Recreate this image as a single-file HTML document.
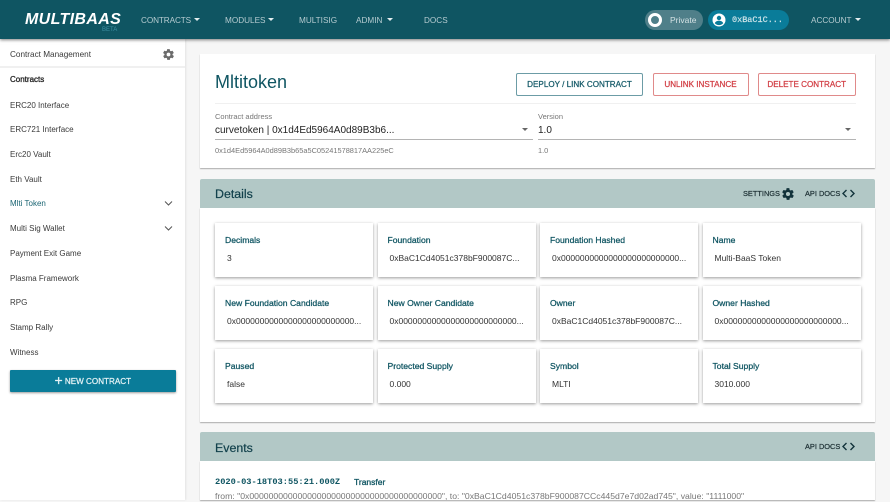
<!DOCTYPE html>
<html><head><meta charset="utf-8"><style>
html,body{margin:0;padding:0;width:890px;height:500px;overflow:hidden;background:#f6f6f6;font-family:"Liberation Sans",sans-serif;color:#333}
.a{position:absolute;white-space:nowrap}
#hd{left:0;top:0;width:890px;height:39px;background:#0f5562;box-shadow:0 1px 3px rgba(0,0,0,.5);z-index:5}
.nav{top:15px;font-size:8.2px;color:#b5cbd0;line-height:11px}
.car{position:absolute;top:18px;width:0;height:0;border-left:3.5px solid transparent;border-right:3.5px solid transparent;border-top:3.5px solid #e4eeef}
#sb{left:0;top:39px;width:185px;height:461px;background:#fff;box-shadow:1px 0 2px rgba(0,0,0,.08)}
.si{left:10px;font-size:8px;line-height:11px;color:#3a3a3a}
.card{background:#fff;box-shadow:0 1px 1px rgba(0,0,0,.3)}
.btn{box-sizing:border-box;height:23px;top:73px;border:1px solid #e08a8a;border-radius:2px;font-size:8.1px;line-height:21px;text-align:center;color:#d23f45;background:#fff;-webkit-text-stroke:.25px currentColor}
.bar{background:#b2c8c6;left:200px;width:675px;height:29px;border-radius:2px 2px 0 0}
.tc{width:158px;height:54px;background:#fff;box-shadow:0 1px 3px rgba(0,0,0,.4);position:absolute}
.tc b{position:absolute;left:10px;top:12px;font-size:8.6px;font-weight:normal;-webkit-text-stroke:.25px #0f5562;line-height:11px;color:#0f5562;white-space:nowrap}
.tc span{position:absolute;left:12px;top:30px;font-size:8.5px;line-height:11px;color:#333;white-space:nowrap}
.sm{font-size:7.4px;line-height:10px;color:#1c2f33;-webkit-text-stroke:.2px #1c2f33}
</style></head><body>
<div class="a" id="hd"></div>
<div class="a" style="z-index:6;left:25px;top:11px;font-size:16px;line-height:18px;font-weight:bold;font-style:italic;color:#fff;letter-spacing:.35px">MULTIBAAS</div>
<div class="a" style="z-index:6;left:102px;top:27px;font-size:6px;line-height:7px;color:#3d8fa3">BETA</div>
<div style="position:absolute;z-index:6;left:0;top:0;width:890px;height:39px">
<div class="a nav" style="left:141px;letter-spacing:-.1px">CONTRACTS</div><div class="car" style="left:194px"></div>
<div class="a nav" style="left:225px">MODULES</div><div class="car" style="left:268px"></div>
<div class="a nav" style="left:299px">MULTISIG</div>
<div class="a nav" style="left:356px">ADMIN</div><div class="car" style="left:387px"></div>
<div class="a nav" style="left:424px">DOCS</div>
<div class="a" style="left:645px;top:10px;width:58px;height:20px;border-radius:10px;background:#4f7f89"></div>
<div class="a" style="left:648px;top:13px;width:8px;height:8px;border:3px solid #fff;border-radius:50%;background:#4f7f89"></div>
<div class="a" style="left:670px;top:15px;font-size:8.5px;line-height:11px;color:#d5e2e4">Private</div>
<div class="a" style="left:708px;top:10px;width:81px;height:20px;border-radius:10px;background:#0a7c99"></div>
<svg class="a" style="left:712px;top:13px" width="14" height="14" viewBox="0 0 14 14"><circle cx="7" cy="7" r="6.5" fill="#fff"/><circle cx="7" cy="5" r="2.2" fill="#0a7c99"/><path d="M2.8 10.2c.8-1.8 2.4-2.4 4.2-2.4s3.4.6 4.2 2.4c-1 1.2-2.5 1.9-4.2 1.9s-3.2-.7-4.2-1.900z" fill="#0a7c99"/></svg>
<div class="a" style="left:732px;top:15px;font-size:8.5px;line-height:11px;font-family:'Liberation Mono',monospace;color:#cfe5ea;-webkit-text-stroke:.2px #cfe5ea">0xBaC1C...</div>
<div class="a nav" style="left:811px">ACCOUNT</div><div class="car" style="left:855px"></div>
</div>

<div class="a" id="sb"></div>
<div class="a si" style="top:49px;font-size:8.2px">Contract Management</div>
<svg class="a" style="left:162px;top:48px" width="13" height="13" viewBox="0 0 24 24"><path fill="#6b6b6b" d="M19.4 13c.1-.3.1-.7.1-1s0-.7-.1-1l2.100-1.600c.2-.2.2-.4.100-.6l-2-3.500c-.1-.2-.4-.3-.6-.2l-2.500 1c-.5-.4-1.100-.7-1.700-1l-.4-2.600c0-.3-.2-.5-.5-.5h-4c-.3 0-.5.2-.5.500l-.4 2.600c-.6.300-1.200.6-1.700 1l-2.500-1c-.2-.1-.5 0-.6.200l-2 3.500c-.1.200-.1.400.1.600L4.600 11c-.1.300-.1.700-.1 1s0 .7.100 1l-2.100 1.600c-.2.200-.2.400-.1.600l2 3.500c.1.200.4.300.6.200l2.500-1c.5.400 1.100.7 1.700 1l.4 2.600c0 .3.200.5.500.5h4c.3 0 .5-.2.500-.5l.4-2.600c.6-.3 1.200-.6 1.700-1l2.500 1c.2.100.5 0 .6-.2l2-3.500c.1-.2.100-.4-.1-.6L19.400 13zM12 15.500a3.500 3.500 0 1 1 0-7 3.500 3.500 0 0 1 0 7z"/></svg>
<div class="a" style="left:0;top:66px;width:185px;height:2px;background:#f0f0f0"></div>
<div class="a si" style="top:74px;-webkit-text-stroke:.3px #222;color:#222">Contracts</div>
<div class="a si" style="top:100px">ERC20 Interface</div>
<div class="a si" style="top:124px">ERC721 Interface</div>
<div class="a si" style="top:149px">Erc20 Vault</div>
<div class="a si" style="top:174px">Eth Vault</div>
<div class="a si" style="top:198px;color:#1c6674">Mlti Token</div>
<svg class="a" style="left:164px;top:200px" width="9" height="7" viewBox="0 0 9 7"><path d="M1 1.500l3.500 3.500L8 1.500" fill="none" stroke="#555" stroke-width="1"/></svg>
<div class="a si" style="top:223px">Multi Sig Wallet</div>
<svg class="a" style="left:164px;top:225px" width="9" height="7" viewBox="0 0 9 7"><path d="M1 1.500l3.500 3.500L8 1.500" fill="none" stroke="#555" stroke-width="1"/></svg>
<div class="a si" style="top:248px">Payment Exit Game</div>
<div class="a si" style="top:273px">Plasma Framework</div>
<div class="a si" style="top:297px">RPG</div>
<div class="a si" style="top:322px">Stamp Rally</div>
<div class="a si" style="top:347px">Witness</div>
<div class="a" style="left:10px;top:370px;width:165.5px;height:22px;background:#0a7c99;border-radius:1px;box-shadow:0 1px 2px rgba(0,0,0,.4);color:#e4f2f5;font-size:8.1px;line-height:23px;text-align:center;-webkit-text-stroke:.25px #e4f2f5"><span style="font-size:14px;line-height:10px;vertical-align:-1px">+</span> NEW CONTRACT</div>

<div class="a card" style="left:200px;top:54px;width:675px;height:114px"></div>
<div class="a" style="left:215px;top:71px;font-size:18px;line-height:22px;color:#0f5562">Mltitoken</div>
<div class="a btn" style="left:516px;width:127px;border-color:#6c9ca6;color:#165b69">DEPLOY / LINK CONTRACT</div>
<div class="a btn" style="left:652.5px;width:96px">UNLINK INSTANCE</div>
<div class="a btn" style="left:757.5px;width:98.5px">DELETE CONTRACT</div>
<div class="a" style="left:215px;top:103px;width:641px;height:1px;background:#f0f0f0"></div>
<div class="a" style="left:215px;top:112px;font-size:7.5px;line-height:9px;color:#777">Contract address</div>
<div class="a" style="left:215px;top:124px;font-size:10px;line-height:13px;color:#222">curvetoken | 0x1d4Ed5964A0d89B3b6...</div>
<div class="a" style="left:215px;top:139px;width:318px;height:1px;background:#b4b4b4"></div>
<div class="a" style="left:522px;top:128px;border-left:3px solid transparent;border-right:3px solid transparent;border-top:3px solid #666"></div>
<div class="a" style="left:215px;top:146px;font-size:7.4px;line-height:9px;color:#777">0x1d4Ed5964A0d89B3b65a5C05241578817AA225eC</div>
<div class="a" style="left:538px;top:112px;font-size:7.5px;line-height:9px;color:#777">Version</div>
<div class="a" style="left:538px;top:124px;font-size:10px;line-height:13px;color:#222">1.0</div>
<div class="a" style="left:538px;top:139px;width:318px;height:1px;background:#b4b4b4"></div>
<div class="a" style="left:845px;top:128px;border-left:3px solid transparent;border-right:3px solid transparent;border-top:3px solid #666"></div>
<div class="a" style="left:538px;top:146px;font-size:7.4px;line-height:9px;color:#777">1.0</div>

<div class="a card" style="left:200px;top:208px;width:675px;height:214px"></div>
<div class="a bar" style="top:179px"></div>
<div class="a" style="left:215px;top:187px;font-size:12.4px;line-height:15px;color:#11404b;-webkit-text-stroke:.2px #11404b">Details</div>
<div class="a sm" style="left:743px;top:189px">SETTINGS</div>
<svg class="a" style="left:781px;top:187px" width="14" height="14" viewBox="0 0 24 24"><path fill="#12333b" d="M19.4 13c.1-.3.1-.7.1-1s0-.7-.1-1l2.100-1.600c.2-.2.2-.4.100-.6l-2-3.500c-.1-.2-.4-.3-.6-.2l-2.500 1c-.5-.4-1.100-.7-1.700-1l-.4-2.600c0-.3-.2-.5-.5-.5h-4c-.3 0-.5.2-.5.500l-.4 2.600c-.6.300-1.200.6-1.700 1l-2.500-1c-.2-.1-.5 0-.6.200l-2 3.500c-.1.200-.1.400.1.600L4.600 11c-.1.300-.1.700-.1 1s0 .7.100 1l-2.100 1.600c-.2.200-.2.400-.1.600l2 3.500c.1.200.4.300.6.200l2.500-1c.5.400 1.100.7 1.700 1l.4 2.600c0 .3.200.5.500.5h4c.3 0 .5-.2.500-.5l.4-2.600c.6-.3 1.200-.6 1.700-1l2.500 1c.2.100.5 0 .6-.2l2-3.500c.1-.2.100-.4-.1-.6L19.400 13zM12 15.500a3.500 3.500 0 1 1 0-7 3.500 3.500 0 0 1 0 7z"/></svg>
<div class="a sm" style="left:805px;top:189px">API DOCS</div>
<svg class="a" style="left:842px;top:189px" width="13" height="9" viewBox="0 0 13 9"><path d="M4.5 1L1 4.5 4.5 8M8.5 1L12 4.5 8.5 8" fill="none" stroke="#12333b" stroke-width="1.4"/></svg>

<div class="tc" style="left:215px;top:223px"><b>Decimals</b><span>3</span></div>
<div class="tc" style="left:377.5px;top:223px"><b>Foundation</b><span>0xBaC1Cd4051c378bF900087C...</span></div>
<div class="tc" style="left:540px;top:223px"><b>Foundation Hashed</b><span>0x0000000000000000000000000...</span></div>
<div class="tc" style="left:702.5px;top:223px"><b>Name</b><span>Multi-BaaS Token</span></div>
<div class="tc" style="left:215px;top:286px"><b>New Foundation Candidate</b><span>0x0000000000000000000000000...</span></div>
<div class="tc" style="left:377.5px;top:286px"><b>New Owner Candidate</b><span>0x0000000000000000000000000...</span></div>
<div class="tc" style="left:540px;top:286px"><b>Owner</b><span>0xBaC1Cd4051c378bF900087C...</span></div>
<div class="tc" style="left:702.5px;top:286px"><b>Owner Hashed</b><span>0x0000000000000000000000000...</span></div>
<div class="tc" style="left:215px;top:349px"><b>Paused</b><span>false</span></div>
<div class="tc" style="left:377.5px;top:349px"><b>Protected Supply</b><span>0.000</span></div>
<div class="tc" style="left:540px;top:349px"><b>Symbol</b><span>MLTI</span></div>
<div class="tc" style="left:702.5px;top:349px"><b>Total Supply</b><span>3010.000</span></div>

<div class="a card" style="left:200px;top:461px;width:675px;height:39px"></div>
<div class="a bar" style="top:432px"></div>
<div class="a" style="left:215px;top:441px;font-size:12.4px;line-height:15px;color:#11404b;-webkit-text-stroke:.2px #11404b">Events</div>
<div class="a sm" style="left:805px;top:442px">API DOCS</div>
<svg class="a" style="left:842px;top:442px" width="13" height="9" viewBox="0 0 13 9"><path d="M4.5 1L1 4.5 4.5 8M8.5 1L12 4.5 8.5 8" fill="none" stroke="#12333b" stroke-width="1.4"/></svg>
<div class="a" style="left:215px;top:477px;font-size:8.7px;line-height:11px;font-family:'Liberation Mono',monospace;font-weight:bold;color:#0f5562">2020-03-18T03:55:21.000Z</div>
<div class="a" style="left:354px;top:477px;font-size:8.5px;line-height:11px;color:#0f5562;-webkit-text-stroke:.3px #0f5562">Transfer</div>
<div class="a" style="left:215px;top:491px;font-size:8.66px;line-height:11px;color:#777">from: "0x0000000000000000000000000000000000000000", to: "0xBaC1Cd4051c378bF900087CCc445d7e7d02ad745", value: "1111000"</div>
</body></html>
